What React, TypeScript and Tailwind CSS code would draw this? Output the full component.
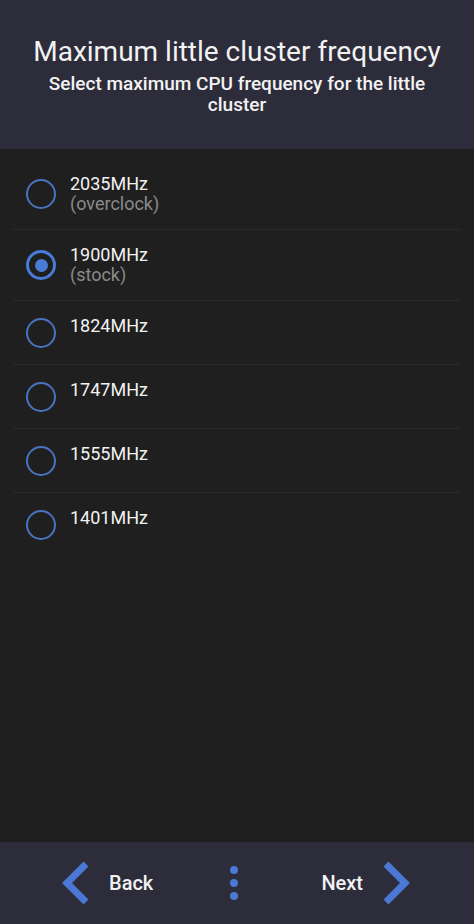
const options = [
  { freq: '2035MHz', note: '(overclock)' },
  { freq: '1900MHz', note: '(stock)' },
  { freq: '1824MHz' },
  { freq: '1747MHz' },
  { freq: '1555MHz' },
  { freq: '1401MHz' },
];

function Radio({ checked }: { checked: boolean }) {
  if (checked) {
    return (
      <div className="w-[30px] h-[30px] rounded-full border-[3px] border-[#4a7bd8] flex items-center justify-center shrink-0">
        <div className="w-[13px] h-[13px] rounded-full bg-[#4a7bd8]" />
      </div>
    );
  }
  return <div className="w-[30px] h-[30px] rounded-full border-2 border-[#4a72c0] shrink-0" />;
}

function Chevron({ dir }: { dir: 'left' | 'right' }) {
  return (
    <svg width="28" height="44" viewBox="0 0 28 44" fill="none">
      {dir === 'left' ? (
        <path d="M24 3 L5 22 L24 41" stroke="#4a78d4" strokeWidth="7" />
      ) : (
        <path d="M4 3 L23 22 L4 41" stroke="#4a78d4" strokeWidth="7" />
      )}
    </svg>
  );
}

export default function App() {
  return (
    <div
      className="w-[474px] h-[924px] flex flex-col bg-[#1f1f1f] text-[#f2f2f2]"
      style={{ fontFamily: 'Roboto, "Liberation Sans", sans-serif' }}
    >
      {/* header */}
      <div className="h-[149px] bg-[#2d2c3a] flex flex-col items-center pt-[35px] px-6 text-center shrink-0">
        <h1 className="text-[28px] leading-[34px] font-normal">Maximum little cluster frequency</h1>
        <p className="mt-[4px] text-[19px] leading-[21px] font-medium px-6">
          Select maximum CPU frequency for the little cluster
        </p>
      </div>

      {/* options */}
      <div className="flex-1 pt-[10px]">
        {options.map((o, i) => (
          <div
            key={o.freq}
            className={
              'mx-[13px] flex items-center py-[15px] pl-[13px] gap-[14px] ' +
              (i < options.length - 1 ? 'border-b border-[#2a2a2a]' : '')
            }
          >
            <Radio checked={i === 1} />
            <div className="flex flex-col text-[18px] leading-[20px]">
              <span>{o.freq}</span>
              {o.note ? <span className="text-[#8a8a8a]">{o.note}</span> : <span className="h-[13px]" />}
            </div>
          </div>
        ))}
      </div>

      {/* footer */}
      <div className="h-[82px] bg-[#2d2c3a] flex items-center justify-between pl-[62px] pr-[64px] shrink-0">
        <div className="flex items-center gap-[19px]">
          <Chevron dir="left" />
          <span className="text-[20px] font-medium">Back</span>
        </div>
        <div className="flex flex-col gap-[5px] mr-[6px]">
          <div className="w-[8px] h-[8px] rounded-full bg-[#4a78d4]" />
          <div className="w-[8px] h-[8px] rounded-full bg-[#4a78d4]" />
          <div className="w-[8px] h-[8px] rounded-full bg-[#4a78d4]" />
        </div>
        <div className="flex items-center gap-[19px]">
          <span className="text-[20px] font-medium">Next</span>
          <Chevron dir="right" />
        </div>
      </div>
    </div>
  );
}
